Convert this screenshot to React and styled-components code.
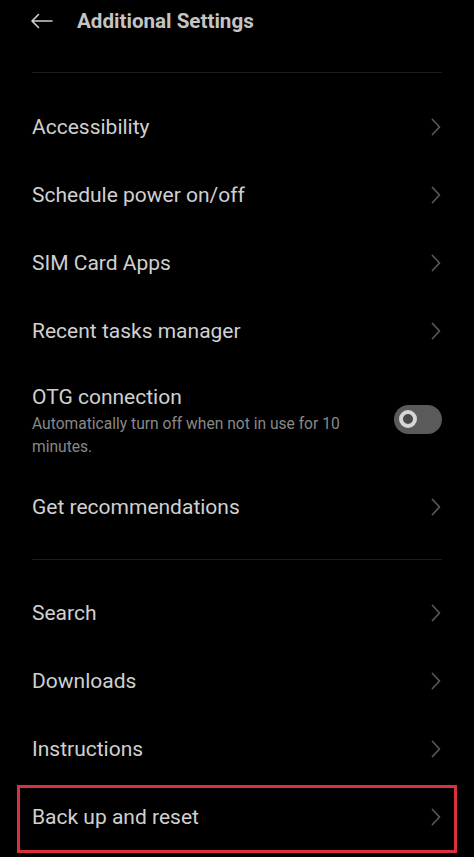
import React from 'react';
import styled, { createGlobalStyle } from 'styled-components';

const GlobalStyle = createGlobalStyle`
  html, body {
    margin: 0;
    padding: 0;
    background: #000;
  }
  body {
    font-family: Roboto, "Noto Sans", sans-serif;
    -webkit-font-smoothing: antialiased;
  }
`;

const Screen = styled.div`
  width: 474px;
  min-height: 857px;
  background: #000;
  padding: 0 32px;
  box-sizing: border-box;
  overflow: hidden;
`;

const Header = styled.div`
  height: 41px;
  display: flex;
  align-items: center;
  gap: 24px;
  margin: 0 0 31px -2px;
`;

const BackButton = styled.div`
  width: 23px;
  height: 16px;
  display: flex;
  align-items: center;
`;

const Title = styled.h1`
  margin: 0;
  font-size: 20.6px;
  font-weight: 700;
  color: #c4c4c4;
`;

const Divider = styled.div`
  height: 1px;
  background: #1c1c1c;
  margin: ${p => p.$spacing || '0'};
`;

const Row = styled.div`
  position: relative;
  height: 68px;
  display: flex;
  align-items: center;
  justify-content: space-between;

  ${p => p.$highlighted && `
    &::after {
      content: '';
      position: absolute;
      left: -15px;
      right: -15px;
      top: 2px;
      bottom: -2px;
      border: 3px solid #d9303b;
      pointer-events: none;
    }
  `}
`;

const Label = styled.span`
  font-size: 21px;
  color: #d0d0d0;
  line-height: 24px;
`;

const ToggleRow = styled.div`
  display: flex;
  align-items: center;
  justify-content: space-between;
  padding: 20px 0 14px;
`;

const ToggleText = styled.div`
  display: flex;
  flex-direction: column;
  width: 330px;
`;

const Subtitle = styled.span`
  margin-top: 4px;
  font-size: 15.6px;
  line-height: 23px;
  color: #888;
`;

const Toggle = styled.div`
  width: 48px;
  height: 29px;
  border-radius: 15px;
  background: #5a5a5a;
  display: flex;
  align-items: center;
  padding-left: 5px;
  box-sizing: border-box;
  margin-top: -6px;
`;

const Knob = styled.div`
  width: 10px;
  height: 10px;
  border-radius: 50%;
  border: 4px solid #d6d6d6;
  background: #4a4a4a;
`;

const Chevron = () => (
  <svg width="10" height="18" viewBox="0 0 10 18" style={{ marginRight: '1px' }}>
    <path d="M1.5 1.5 L8.5 9 L1.5 16.5" fill="none" stroke="#555" strokeWidth="1.8" strokeLinecap="round" strokeLinejoin="round" />
  </svg>
);

const NavRow = ({ label, highlighted }) => (
  <Row $highlighted={highlighted}>
    <Label>{label}</Label>
    <Chevron />
  </Row>
);

export default function App() {
  return (
    <>
      <GlobalStyle />
      <Screen>
        <Header>
          <BackButton>
            <svg width="23" height="16" viewBox="0 0 23 16">
              <path d="M22 8 H2 M8.5 1.5 L2 8 L8.5 14.5" fill="none" stroke="#d0d0d0" strokeWidth="1.6" strokeLinecap="round" strokeLinejoin="round" />
            </svg>
          </BackButton>
          <Title>Additional Settings</Title>
        </Header>
        <Divider $spacing="0 0 20px" />
        <NavRow label="Accessibility" />
        <NavRow label="Schedule power on/off" />
        <NavRow label="SIM Card Apps" />
        <NavRow label="Recent tasks manager" />
        <ToggleRow>
          <ToggleText>
            <Label>OTG connection</Label>
            <Subtitle>Automatically turn off when not in use for 10 minutes.</Subtitle>
          </ToggleText>
          <Toggle>
            <Knob />
          </Toggle>
        </ToggleRow>
        <NavRow label="Get recommendations" />
        <Divider $spacing="18px 0 19px" />
        <NavRow label="Search" />
        <NavRow label="Downloads" />
        <NavRow label="Instructions" />
        <NavRow label="Back up and reset" highlighted />
      </Screen>
    </>
  );
}
